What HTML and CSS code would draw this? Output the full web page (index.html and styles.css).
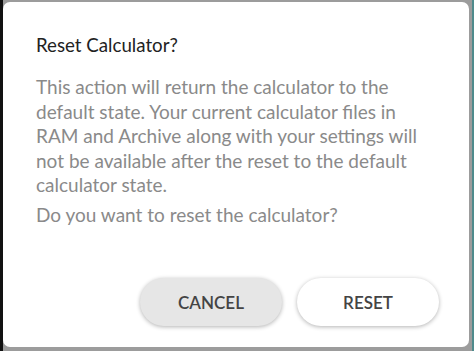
FILE: index.html
```html
<!DOCTYPE html>
<html lang="en">
<head>
    <meta charset="UTF-8">
    <meta name="viewport" content="width=device-width, initial-scale=1.0">
    <title>Reset Calculator?</title>
    <link rel="stylesheet" href="styles.css">
</head>
<body>
    <div class="backdrop">
        <div class="dialog">
            <h2 class="dialog-title">Reset Calculator?</h2>
            <p class="dialog-text">
                This action will return the calculator to the<br>
                default state. Your current calculator files in<br>
                RAM and Archive along with your settings will<br>
                not be available after the reset to the default<br>
                calculator state.
            </p>
            <p class="dialog-text">Do you want to reset the calculator?</p>

            <div class="dialog-actions">
                <button class="btn btn-cancel">CANCEL</button>
                <button class="btn btn-reset">RESET</button>
            </div>
        </div>
    </div>
</body>
</html>
```

FILE: styles.css
```css
:root {
    --text-title: #222222;
    --text-body: #8a8a8a;
    --btn-text: #444444;
    --overlay: #9c9c9c;
    --radius: 7px;
}

* {
    margin: 0;
    padding: 0;
    box-sizing: border-box;
}

body {
    font-family: Lato, 'Open Sans', sans-serif;
    background: var(--overlay);
    width: 474px;
    height: 351px;
    overflow: hidden;
}

.backdrop {
    height: 100%;
    padding: 2px 5px 4px 0;
    border-left: 3px solid #111111;
    border-right: 2px solid #4f8a8c;
}

.dialog {
    height: 100%;
    background: #ffffff;
    border-radius: var(--radius);
    padding: 31px 30px 21px 33px;
    margin-right: -2px;
    display: flex;
    flex-direction: column;
}

.dialog-title {
    font-size: 18.7px;
    font-weight: 400;
    line-height: 24px;
    color: var(--text-title);
    margin-bottom: 18px;
}

.dialog-text {
    font-size: 19px;
    line-height: 24.6px;
    color: var(--text-body);
    margin-bottom: 5px;
}

.dialog-actions {
    margin-top: auto;
    display: flex;
    justify-content: flex-end;
    gap: 15px;
}

.btn {
    width: 142px;
    height: 48px;
    border: none;
    border-radius: 24px;
    font-family: Lato, sans-serif;
    font-size: 17px;
    font-weight: 600;
    color: var(--btn-text);
    box-shadow: 0 1px 4px rgba(0, 0, 0, 0.3);
    cursor: pointer;
}

.btn-cancel {
    background: #e6e6e6;
}

.btn-reset {
    background: #ffffff;
}
```
